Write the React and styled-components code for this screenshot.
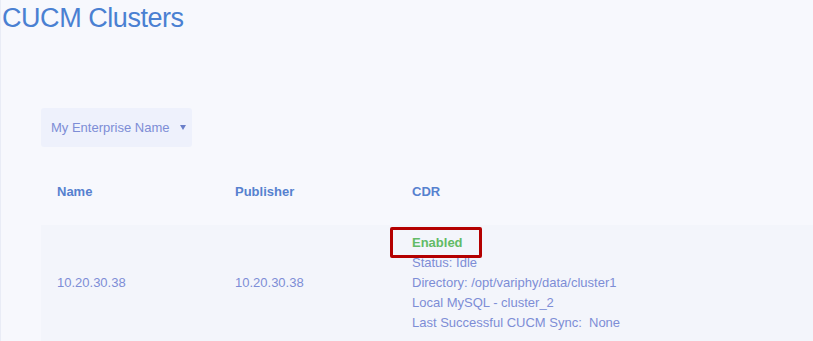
import React from "react";
import styled, { createGlobalStyle } from "styled-components";

const Global = createGlobalStyle`
  html, body { margin: 0; padding: 0; background: #f7f8fd; }
  body { font-family: "Liberation Sans", Arial, sans-serif; }
`;

const Page = styled.div`
  min-height: 341px;
  border-left: 1px solid #e9ecf6;
  box-sizing: border-box;
  overflow: hidden;
`;

const Title = styled.h1`
  margin: 0;
  padding: 3px 0 0 1px;
  font-weight: 400;
  font-size: 27px;
  letter-spacing: -0.45px;
  line-height: 30px;
  color: #4a80d2;
`;

const Content = styled.div`
  padding: 75px 0 0 40px;
`;

const Select = styled.div`
  width: 151px;
  height: 39px;
  box-sizing: border-box;
  padding: 0 6px 0 10px;
  display: flex;
  align-items: center;
  justify-content: space-between;
  background: #eef1fc;
  border-radius: 3px;
  font-size: 13px;
  color: #7d8dd6;
`;

const Table = styled.div`
  display: grid;
  grid-template-columns: 178px 177px 1fr;
`;

const HeadCell = styled.div`
  padding: 35px 0 23px 16px;
  line-height: 20px;
  font-size: 13px;
  font-weight: 700;
  color: #5681cf;
`;

const Cell = styled.div`
  background: #f3f5fb;
  padding: 8px 0 8px 16px;
  line-height: 20px;
  font-size: 13px;
  color: #7d8dd6;
  display: flex;
  flex-direction: column;
  justify-content: ${(p) => (p.$stack ? "flex-start" : "center")};
`;

const Line = styled.div`
  white-space: pre;
`;

const Enabled = styled.span`
  position: relative;
  font-weight: 700;
  color: #62bb66;
`;

const Highlight = styled.span`
  position: absolute;
  left: -22px;
  top: -8px;
  width: 92px;
  height: 31px;
  box-sizing: border-box;
  border: 3px solid #b40000;
  border-radius: 2px;
`;

export default function App() {
  return (
    <>
      <Global />
      <Page>
        <Title>CUCM Clusters</Title>
        <Content>
          <Select>
            <span>My Enterprise Name</span>
            <svg width="6" height="5" viewBox="0 0 6 5">
              <path d="M0 0 H6 L3 5 Z" fill="#6a7fc9" />
            </svg>
          </Select>
          <Table>
            <HeadCell>Name</HeadCell>
            <HeadCell>Publisher</HeadCell>
            <HeadCell>CDR</HeadCell>
            <Cell>10.20.30.38</Cell>
            <Cell>10.20.30.38</Cell>
            <Cell $stack>
              <Line>
                <Enabled>
                  Enabled
                  <Highlight />
                </Enabled>
              </Line>
              <Line>Status: Idle</Line>
              <Line>Directory: /opt/variphy/data/cluster1</Line>
              <Line>Local MySQL - cluster_2</Line>
              <Line>Last Successful CUCM Sync:  None</Line>
            </Cell>
          </Table>
        </Content>
      </Page>
    </>
  );
}
